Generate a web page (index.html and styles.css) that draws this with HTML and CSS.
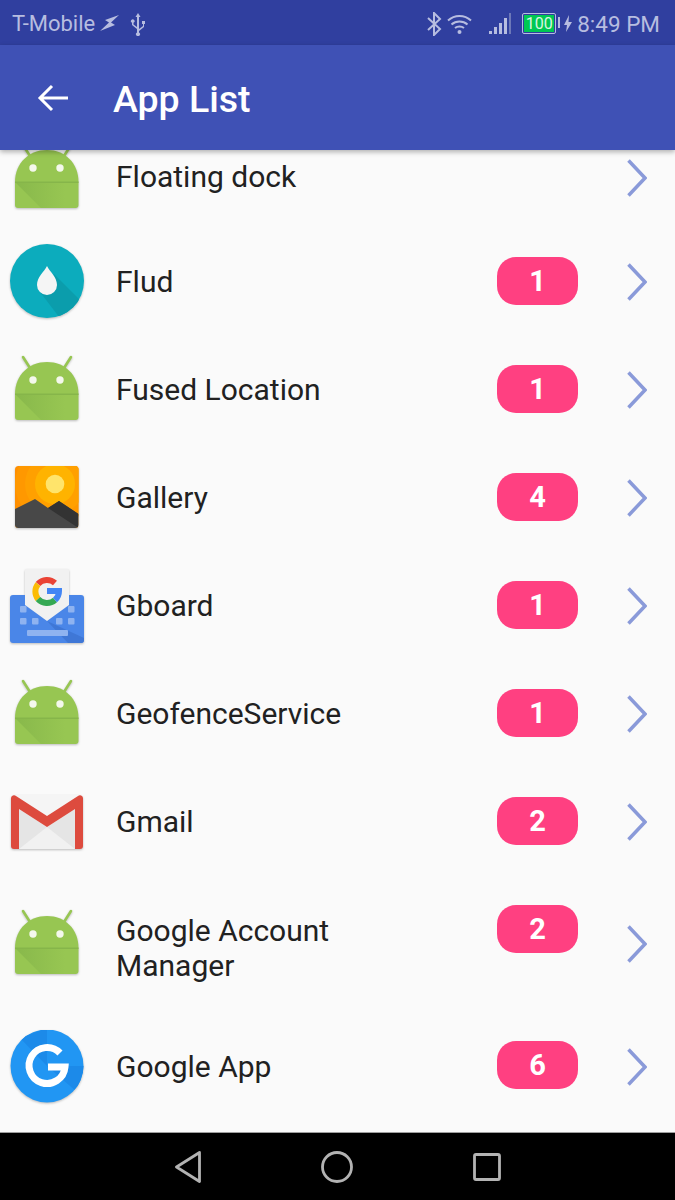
FILE: index.html
```html
<!DOCTYPE html>
<html>
<head>
<title>App List</title>
<link rel="stylesheet" href="styles.css">
</head>
<body>
<svg class="defs" width="0" height="0">
  <defs>
    <clipPath id="flud-clip"><circle cx="37" cy="37" r="37"/></clipPath>
    <clipPath id="gallery-clip"><rect x="5" y="5" width="63.500" height="62" rx="3.500"/></clipPath>
    <clipPath id="gapp-clip"><circle cx="37" cy="36" r="36.500"/></clipPath>
    <linearGradient id="android-fold" x1="0" y1="0" x2="1" y2="0">
      <stop offset="0" stop-color="#88b84b"/>
      <stop offset="1" stop-color="#97c652"/>
    </linearGradient>
  </defs>
  <symbol id="android" viewBox="0 0 74 74">
    <path d="M13 4l7 11M61 4l-7 11" stroke="#97c652" stroke-width="2.600" stroke-linecap="round"/>
    <path d="M5 41C5 22 19 9 37 9s31.500 13 31.500 32v23a3 3 0 0 1-3 3H8a3 3 0 0 1-3-3z" fill="#97c652"/>
    <path d="M5 41h50v26H31z" fill="url(#android-fold)"/>
    <path d="M5 40.500h63.500v1.500H5z" fill="#86b54a"/>
    <circle cx="23" cy="27" r="3.700" fill="#f4f8ec"/>
    <circle cx="50" cy="27" r="3.700" fill="#f4f8ec"/>
  </symbol>
  <symbol id="chevron" viewBox="0 0 20 38">
    <path d="M1.500 1.500L18 19 1.500 36.500" fill="none" stroke="#8a9ad9" stroke-width="3.500"/>
  </symbol>
</svg>

<div class="status-bar">
  <div class="status-left">
    <span class="carrier">T-Mobile</span>
    <svg width="20" height="20" viewBox="0 0 20 20"><path d="M19 1L5 6l4 2.500L0 17l15-6-4-2.500z" fill="#b7bde0"/></svg>
    <svg class="usb" width="16" height="24" viewBox="0 0 16 24"><path d="M8 1l2.500 4H9v12l4-3v-2h-1V9h3v3h-1v3l-5 4v1.500a2 2 0 1 1-2 0V17l-5-4v-2.200a1.800 1.800 0 1 1 1.500 0V12.500L7 15V5H5.500z" fill="#b7bde0"/></svg>
  </div>
  <div class="status-right">
    <svg width="16" height="24" viewBox="0 0 16 24"><path d="M2 6l12 11-6 6V1l6 6L2 18" fill="none" stroke="#b7bde0" stroke-width="2"/></svg>
    <svg class="wifi" width="25" height="20" viewBox="0 0 25 20"><g fill="none" stroke="#b7bde0" stroke-width="2"><path d="M1 6.500c6.500-6 16.500-6 23 0"/><path d="M4.500 10.500c4.500-4 11.500-4 16 0"/><path d="M8 14c2.500-2 6.500-2 9 0"/></g><circle cx="12.500" cy="18" r="2" fill="#b7bde0"/></svg>
    <svg class="signal" width="22" height="22" viewBox="0 0 22 22"><path d="M0 18h3v3H0zM5 14h3v7H5zM10 10h3v11h-3zM15 5h3v16h-3z" fill="#b7bde0"/><path d="M20 0h2v21h-2z" fill="#6d78b8"/></svg>
    <div class="battery"><span class="battery-level">100</span></div>
    <svg class="charge" width="8" height="17" viewBox="0 0 8 17"><path d="M5 0L0 10h3l-1 7 6-10H4.500z" fill="#b7bde0"/></svg>
    <span class="clock">8:49 PM</span>
  </div>
</div>

<div class="toolbar">
  <svg class="back" width="32" height="28" viewBox="0 0 32 28"><path d="M31 14H3M15 2L3 14l12 12" fill="none" stroke="#fff" stroke-width="3"/></svg>
  <h1>App List</h1>
</div>

<div class="list">
  <div class="row first">
    <svg class="icon"><use href="#android"/></svg>
    <div class="label">Floating dock</div>
    <svg class="chev"><use href="#chevron"/></svg>
  </div>

  <div class="row">
    <svg class="icon icon-up" viewBox="0 0 74 74">
      <circle cx="37" cy="37" r="37" fill="#0cacbd"/>
      <path d="M30 48L44 30l32 32-20 20z" fill="#0b9dac" clip-path="url(#flud-clip)"/>
      <path d="M37 22c3 6 10 11 10 19a10 10 0 0 1-20 0c0-8 7-13 10-19z" fill="#f5f5f5"/>
    </svg>
    <div class="label">Flud</div>
    <div class="badge">1</div>
    <svg class="chev"><use href="#chevron"/></svg>
  </div>

  <div class="row">
    <svg class="icon"><use href="#android"/></svg>
    <div class="label">Fused Location</div>
    <div class="badge">1</div>
    <svg class="chev"><use href="#chevron"/></svg>
  </div>

  <div class="row">
    <svg class="icon" viewBox="0 0 74 74">
      <g clip-path="url(#gallery-clip)">
        <rect x="5" y="5" width="63.500" height="62" fill="#ff8f00"/>
        <circle cx="45" cy="23" r="40" fill="#ff9800"/>
        <circle cx="45" cy="23" r="30" fill="#ffa000"/>
        <circle cx="45" cy="23" r="20" fill="#ffb300"/>
        <circle cx="45" cy="23" r="9.300" fill="#ffe46b"/>
        <path d="M5 48l20-10 13 9 11-7 19.500 13V67H5z" fill="#484848"/>
        <path d="M38 47l11-7 19.500 13v14z" fill="#333"/>
      </g>
    </svg>
    <div class="label">Gallery</div>
    <div class="badge">4</div>
    <svg class="chev"><use href="#chevron"/></svg>
  </div>

  <div class="row">
    <svg class="icon" viewBox="0 0 74 74">
      <rect x="0" y="26" width="74" height="48" rx="3" fill="#4a86e8"/>
      <path d="M37 52l37 17v2a3 3 0 0 1-3 3H58z" fill="#3f77d6"/>
      <g fill="#8fb3f0">
        <rect x="10" y="37" width="6.500" height="6.500" rx="1"/>
        <rect x="58" y="37" width="6.500" height="6.500" rx="1"/>
        <rect x="10" y="49" width="6.500" height="6.500" rx="1"/>
        <rect x="22" y="49" width="6.500" height="6.500" rx="1"/>
        <rect x="46" y="49" width="6.500" height="6.500" rx="1"/>
        <rect x="58" y="49" width="6.500" height="6.500" rx="1"/>
        <rect x="17" y="61" width="41" height="6" rx="1"/>
      </g>
      <path d="M17 0h40a2 2 0 0 1 2 2v34L37 52 15 36V2a2 2 0 0 1 2-2z" fill="#f1f1f1"/>
      <g fill="none" stroke-width="6">
        <path d="M45 14a12 12 0 0 0-17 1" stroke="#ea4335"/>
        <path d="M28 15a12 12 0 0 0 0 15" stroke="#fbbc05"/>
        <path d="M28 30a12 12 0 0 0 17 1" stroke="#34a853"/>
        <path d="M45 31a12 12 0 0 0 4-9H37" stroke="#4285f4"/>
      </g>
    </svg>
    <div class="label">Gboard</div>
    <div class="badge">1</div>
    <svg class="chev"><use href="#chevron"/></svg>
  </div>

  <div class="row">
    <svg class="icon"><use href="#android"/></svg>
    <div class="label">GeofenceService</div>
    <div class="badge">1</div>
    <svg class="chev"><use href="#chevron"/></svg>
  </div>

  <div class="row">
    <svg class="icon" viewBox="0 0 74 74">
      <rect x="4" y="10" width="66" height="54" rx="2" fill="#f5f5f5"/>
      <path d="M9 24l28 18 28-18v40H9z" fill="#e5e5e5"/>
      <path d="M9 64l28-22 28 22z" fill="#f1f1f1"/>
      <path d="M1 13a3 3 0 0 1 5-2l31 20 31-20a3 3 0 0 1 5 2v48a3 3 0 0 1-3 3h-5V24L37 42 9 24v40H4a3 3 0 0 1-3-3z" fill="#dd4b3e"/>
    </svg>
    <div class="label">Gmail</div>
    <div class="badge">2</div>
    <svg class="chev"><use href="#chevron"/></svg>
  </div>

  <div class="row">
    <svg class="icon"><use href="#android"/></svg>
    <div class="label label-wrap">Google Account Manager</div>
    <div class="badge">2</div>
    <svg class="chev"><use href="#chevron"/></svg>
  </div>

  <div class="row last">
    <svg class="icon" viewBox="0 0 74 74">
      <circle cx="37" cy="36" r="36.500" fill="#2196f3"/>
      <g clip-path="url(#gapp-clip)">
        <path d="M37 36V-2L10 8zM37 36h38l-8 26z" fill="#1c8ae9"/>
      </g>
      <path d="M50 23a18 18 0 1 0 5 14H38" fill="none" stroke="#fff" stroke-width="7"/>
    </svg>
    <div class="label">Google App</div>
    <div class="badge">6</div>
    <svg class="chev"><use href="#chevron"/></svg>
  </div>
</div>

<div class="nav-bar">
  <svg width="26" height="32" viewBox="0 0 26 32"><path d="M24.500 1.500L1.500 16l23 14.500z" fill="none" stroke="#b3b3b3" stroke-width="2.800" stroke-linejoin="round"/></svg>
  <svg width="32" height="32" viewBox="0 0 32 32"><circle cx="16" cy="16" r="14.500" fill="none" stroke="#b3b3b3" stroke-width="2.800"/></svg>
  <svg width="28" height="28" viewBox="0 0 28 28"><rect x="1.500" y="1.500" width="25" height="25" rx="1.500" fill="none" stroke="#b3b3b3" stroke-width="2.800"/></svg>
</div>
</body>
</html>
```

FILE: styles.css
```css
html, body {
  margin: 0;
  padding: 0;
}
body {
  width: 675px;
  height: 1200px;
  overflow: hidden;
  display: flex;
  flex-direction: column;
  font-family: Roboto, "Liberation Sans", sans-serif;
  background-color: #fafafa;
}
.defs {
  position: absolute;
}
.status-bar {
  height: 45px;
  flex: none;
  box-sizing: border-box;
  display: flex;
  align-items: center;
  justify-content: space-between;
  padding: 2px 15px 0 12px;
  background-color: #303f9f;
  color: #b7bde0;
  font-size: 22px;
}
.status-left, .status-right {
  display: flex;
  align-items: center;
}
.carrier {
  margin-right: 5px;
}
.usb {
  margin-left: 10px;
}
.wifi {
  margin-left: 5px;
}
.signal {
  margin-left: 17px;
}
.battery {
  width: 30px;
  height: 17px;
  margin: 0 8px 0 11px;
  padding: 1px;
  border: 1px solid #b7bde0;
  border-radius: 2px;
  position: relative;
}
.battery::after {
  content: "";
  position: absolute;
  right: -5px;
  top: 3px;
  width: 2px;
  height: 11px;
  background-color: #b7bde0;
}
.battery-level {
  display: block;
  height: 17px;
  line-height: 17px;
  background-color: #00c853;
  color: #d8f5e2;
  font-size: 16px;
  text-align: center;
}
.clock {
  margin-left: 5px;
  font-size: 22.500px;
}
.toolbar {
  height: 105px;
  flex: none;
  display: flex;
  align-items: center;
  padding-left: 37px;
  background-color: #3f51b5;
  box-shadow: 0 2px 5px rgba(0, 0, 0, 0.3);
  position: relative;
  z-index: 2;
}
.toolbar h1 {
  margin: 2px 0 0 44px;
  color: #fff;
  font-size: 37.500px;
  font-weight: 500;
}
.list {
  flex: 1;
  min-height: 0;
  overflow: hidden;
}
.row {
  display: grid;
  grid-template-columns: 74px 1fr 81px 97px;
  align-items: center;
  min-height: 108px;
  padding-left: 10px;
  box-sizing: border-box;
}
.first {
  min-height: 100px;
  margin-top: -23px;
}
.last {
  min-height: 110px;
}
.icon {
  grid-column: 1;
  width: 74px;
  height: 74px;
  filter: drop-shadow(0 1px 1px rgba(0, 0, 0, 0.25));
}
.icon-up {
  margin-top: -2px;
}
.label {
  grid-column: 2;
  padding: 32px 130px 34px 32px;
  color: #212121;
  font-size: 30px;
  line-height: 35px;
}
.label-wrap {
  padding-top: 37px;
  padding-bottom: 29px;
}
.badge {
  grid-column: 3;
  align-self: start;
  margin-top: 29px;
  height: 48px;
  line-height: 48px;
  border-radius: 19px;
  background-color: #ff4081;
  color: #fff;
  font-size: 29px;
  font-weight: 700;
  text-align: center;
}
.chev {
  grid-column: 4;
  width: 20px;
  height: 38px;
  margin-left: 49px;
}
.nav-bar {
  height: 68px;
  flex: none;
  box-sizing: border-box;
  display: flex;
  align-items: center;
  justify-content: center;
  gap: 120px;
  border-top: 1px solid #9e9e9e;
  background-color: #000;
}
```
